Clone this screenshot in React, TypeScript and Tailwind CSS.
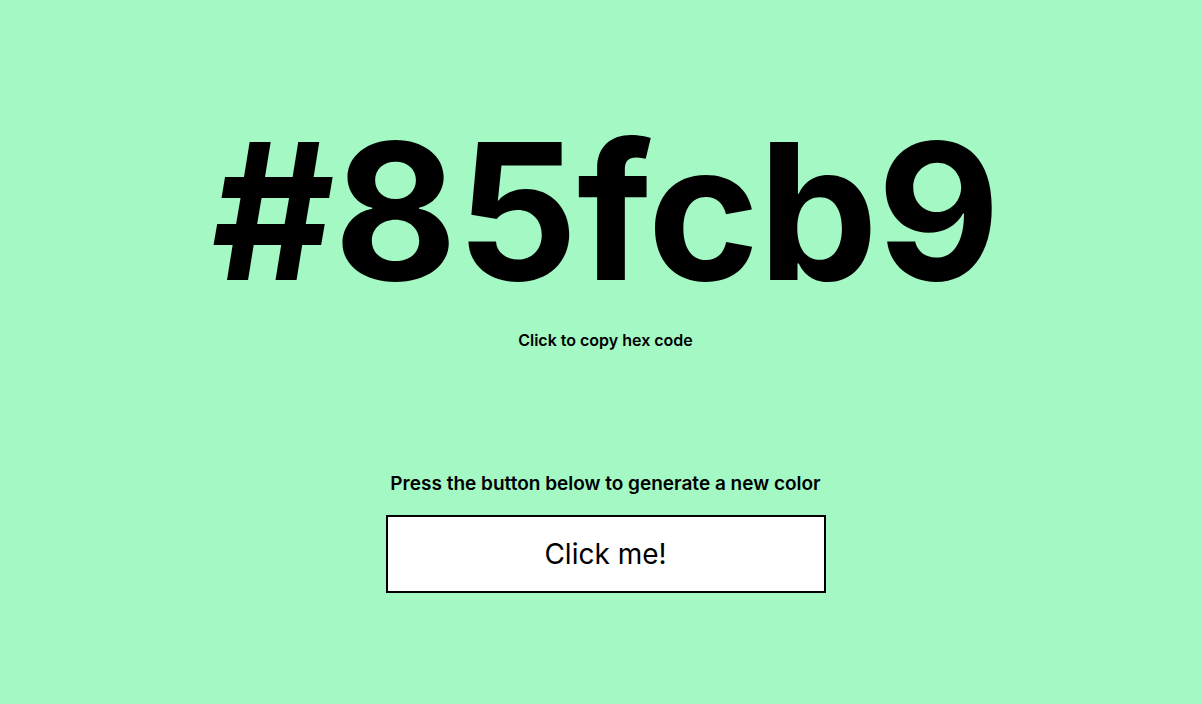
export default function App() {
  return (
    <div className="min-h-screen w-full bg-[#a3f8c3] flex flex-col items-center pl-[9px] text-black" style={{ fontFamily: 'Inter, "Noto Sans", sans-serif' }}>
      <button className="mt-[97px] flex flex-col items-center cursor-pointer">
        <span className="text-[190px] font-bold leading-[228px] tracking-[-1px]">#85fcb9</span>
        <span className="mt-[3px] text-[16px] leading-[24px] font-semibold">Click to copy hex code</span>
      </button>
      <p className="mt-[118px] text-[19px] leading-[28px] font-semibold">Press the button below to generate a new color</p>
      <button className="mt-[17px] w-[440px] h-[78px] bg-white border-2 border-black text-[28px] font-normal">
        Click me!
      </button>
    </div>
  );
}
